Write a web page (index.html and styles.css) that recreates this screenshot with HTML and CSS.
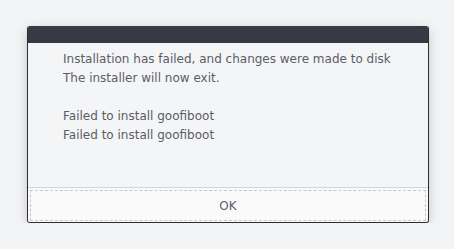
FILE: index.html
```html
<!DOCTYPE html>
<html lang="en">

<head>
    <meta charset="UTF-8" />
    <title>Installation failed</title>
    <link rel="stylesheet" href="styles.css">
</head>

<body>
    <div class="dialog">
        <div class="titlebar"></div>
        <div class="message">
            <p>Installation has failed, and changes were made to disk<br>The installer will now exit.</p>
            <p>Failed to install goofiboot<br>Failed to install goofiboot</p>
        </div>
        <div class="actions">
            <button class="ok">OK</button>
        </div>
    </div>
</body>

</html>
```

FILE: styles.css
```css
body {
    margin: 0;
    background: #f3f4f6;
    font-family: "DejaVu Sans", sans-serif;
    font-size: 12px;
}

.dialog {
    margin: 26px 0 0 27px;
    width: 400px;
    background: #f4f5f7;
    border: 1px solid #2a2c33;
    border-top: none;
    border-radius: 3px;
    overflow: hidden;
    box-shadow: 0 3px 12px rgba(0, 0, 0, 0.18);
}

.titlebar {
    height: 17px;
    background: #363a45;
}

.message {
    height: 137px;
    padding: 7px 0 0 35px;
    color: #5c5c66;
    line-height: 19px;
    border-bottom: 1px solid #cfd4e0;
}

.message p {
    margin: 0 0 19px;
}

.actions {
    display: flex;
    padding: 2px 2px 1px;
    background: #fafafa;
}

.ok {
    flex: 1;
    height: 31px;
    border: 1px dashed #c8c8c8;
    background: #fafafa;
    color: #5c6070;
    font-family: "DejaVu Sans", sans-serif;
    font-size: 12px;
}
```
